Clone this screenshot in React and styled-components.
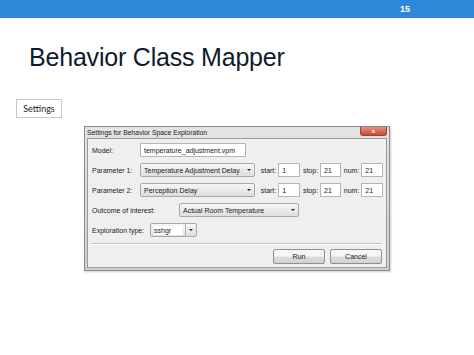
import React from "react";
import styled, { createGlobalStyle } from "styled-components";

const GlobalStyle = createGlobalStyle`
    body {
        margin: 0;
        background: #fff;
        font-family: "Liberation Sans", Arial, sans-serif;
    }
`;

const Slide = styled.div`
    width: 474px;
    height: 355px;
    display: flex;
    flex-direction: column;
    background: #fff;
    overflow: hidden;
`;

const TopBar = styled.div`
    height: 18px;
    background: #2d88d9;
    display: flex;
    align-items: center;
    justify-content: flex-end;
    padding-right: 64px;
    color: #fff;
    font-weight: bold;
    font-size: 9px;
    font-family: "Liberation Sans", Arial, sans-serif;
`;

const Title = styled.h1`
    margin: 24px 0 0 29px;
    font-weight: normal;
    font-size: 25px;
    letter-spacing: -0.2px;
    color: #0f1b2d;
    line-height: 30px;
`;

const SettingsTag = styled.div`
    margin: 27px 0 0 16px;
    width: 44px;
    height: 17px;
    border: 1px solid #c8c8c8;
    display: flex;
    align-items: center;
    justify-content: center;
    font-family: "Lato", sans-serif;
    font-size: 9px;
    color: #222;
`;

const Window = styled.div`
    margin: 8px 0 0 84px;
    width: 304px;
    height: 143px;
    border: 1px solid #8a8a8a;
    background: linear-gradient(#e4e4e4, #cfcfcf);
    display: flex;
    flex-direction: column;
    font-family: "Liberation Sans", Arial, sans-serif;
    font-size: 7px;
    color: #1a1a1a;
    box-shadow: 1px 1px 2px rgba(0, 0, 0, 0.2);
`;

const TitleBar = styled.div`
    height: 11px;
    display: flex;
    align-items: center;
    justify-content: space-between;
    padding-left: 2px;
    font-size: 6.8px;
    color: #222;
`;

const CloseBtn = styled.div`
    width: 25px;
    height: 8px;
    margin: -3px 2px 0 0;
    border-radius: 0 0 3px 3px;
    background: linear-gradient(#e8907a, #c84a34);
    border: 1px solid #9a4232;
    border-top: none;
    color: #fff;
    font-size: 6px;
    font-weight: bold;
    display: flex;
    align-items: center;
    justify-content: center;
`;

const Client = styled.div`
    flex: 1;
    margin: 0 2px 2px 2px;
    border: 1px solid #9a9a9a;
    background: #efefef;
    display: flex;
    flex-direction: column;
    padding: 4px 3px 3px 3px;
    gap: 6px;
`;

const Row = styled.div`
    display: flex;
    align-items: center;
    height: 14px;
    flex-shrink: 0;
`;

const Label = styled.span`
    width: ${(p) => p.w}px;
    flex-shrink: 0;
    padding-left: 1px;
`;

const Field = styled.div`
    width: ${(p) => p.w}px;
    height: 14px;
    box-sizing: border-box;
    border: 1px solid #b5b5b5;
    background: #fff;
    display: flex;
    align-items: center;
    padding-left: 3px;
`;

const Select = styled.div`
    width: ${(p) => p.w}px;
    height: 14px;
    box-sizing: border-box;
    border: 1px solid #a8a8a8;
    border-radius: 2px;
    background: linear-gradient(#f6f6f6, #dedede);
    display: flex;
    align-items: center;
    padding-left: 3px;
`;

const SelectText = styled.span`
    flex: 1;
    background: ${(p) => (p.highlight ? "#fff" : "transparent")};
    margin-right: 2px;
    padding: 1px 0;
`;

const Arrow = styled.span`
    width: 10px;
    height: 100%;
    display: flex;
    align-items: center;
    justify-content: center;
    border-left: ${(p) => (p.split ? "1px solid #b0b0b0" : "none")};
    &::after {
        content: "";
        border-left: 2px solid transparent;
        border-right: 2px solid transparent;
        border-top: 2.5px solid #222;
    }
`;

const Small = styled.span`
    margin: 0 2px 0 ${(p) => p.ml}px;
`;

const Separator = styled.div`
    margin: 0 1px -2px 0;
    border-top: 1px solid #c4c4c4;
    border-bottom: 1px solid #fff;
    flex-shrink: 0;
`;

const ButtonRow = styled.div`
    display: flex;
    justify-content: flex-end;
    gap: 5px;
    padding-right: 1px;
    flex-shrink: 0;
`;

const Button = styled.div`
    width: 52px;
    height: 15px;
    box-sizing: border-box;
    border: 1px solid #8f8f8f;
    border-radius: 2px;
    background: linear-gradient(#f5f5f5 45%, #dcdcdc 55%, #d2d2d2);
    display: flex;
    align-items: center;
    justify-content: center;
`;

const ranges = [
    { name: "Parameter 1:", value: "Temperature Adjustment Delay" },
    { name: "Parameter 2:", value: "Perception Delay" },
];

export default function App() {
    return (
        <Slide>
            <GlobalStyle />
            <TopBar>15</TopBar>
            <Title>Behavior Class Mapper</Title>
            <SettingsTag>Settings</SettingsTag>
            <Window>
                <TitleBar>
                    <span>Settings for Behavior Space Exploration</span>
                    <CloseBtn>x</CloseBtn>
                </TitleBar>
                <Client>
                    <Row>
                        <Label w={48}>Model:</Label>
                        <Field w={106}>temperature_adjustment.vpm</Field>
                    </Row>
                    {ranges.map((r) => (
                        <Row key={r.name}>
                            <Label w={48}>{r.name}</Label>
                            <Select w={117}>
                                <SelectText>{r.value}</SelectText>
                                <Arrow />
                            </Select>
                            <Small ml={6}>start:</Small>
                            <Field w={22}>1</Field>
                            <Small ml={3}>stop:</Small>
                            <Field w={21}>21</Field>
                            <Small ml={3}>num:</Small>
                            <Field w={22}>21</Field>
                        </Row>
                    ))}
                    <Row>
                        <Label w={87}>Outcome of interest:</Label>
                        <Select w={120}>
                            <SelectText>Actual Room Temperature</SelectText>
                            <Arrow />
                        </Select>
                    </Row>
                    <Row>
                        <Label w={58}>Exploration type:</Label>
                        <Select w={47}>
                            <SelectText highlight>sshgr</SelectText>
                            <Arrow split />
                        </Select>
                    </Row>
                    <Separator />
                    <ButtonRow>
                        <Button>Run</Button>
                        <Button>Cancel</Button>
                    </ButtonRow>
                </Client>
            </Window>
        </Slide>
    );
}
